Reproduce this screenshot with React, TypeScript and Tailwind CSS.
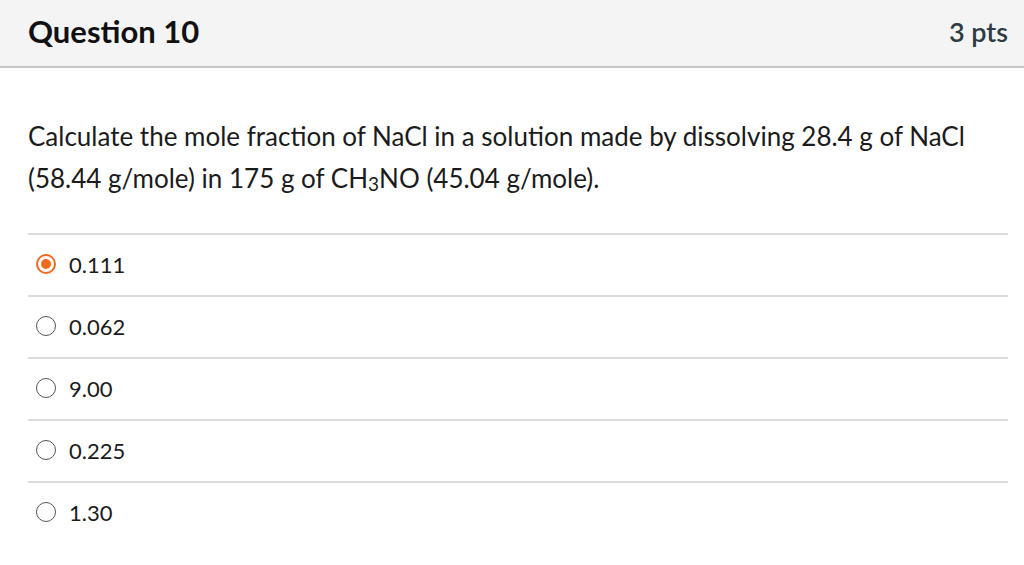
import React from "react";

const options = ["0.111", "0.062", "9.00", "0.225", "1.30"];

export default function App() {
  return (
    <div className="w-[1024px] h-[565px] bg-white overflow-hidden" style={{ fontFamily: "Lato, 'Liberation Sans', sans-serif" }}>
      <div className="h-[68px] bg-[#f4f4f4] border-b-2 border-[#c5c5c5] flex items-center justify-between pl-7 pr-4">
        <div className="text-[31px] font-bold text-[#111] leading-none -mt-[4px]">Question 10</div>
        <div className="text-[27px] font-semibold text-[#2d3b45] leading-none -mt-[3px]">3 pts</div>
      </div>
      <div className="px-7 pt-[47px]">
        <div className="text-[26px] leading-[42px] text-[#1b1b1b]">
          Calculate the mole fraction of NaCl in a solution made by dissolving 28.4 g of NaCl
          <br />
          (58.44 g/mole) in 175 g of CH<sub className="text-[19px] relative top-[3px] align-baseline">3</sub>NO (45.04 g/mole).
        </div>
        <div className="mt-[34px] w-[980px]">
          {options.map((o, i) => (
            <div key={o} className="h-[62px] border-t-2 border-[#dcdcdc] flex items-center">
              <div className="w-[20px] h-[20px] ml-[8px] -mt-[2px] rounded-full flex items-center justify-center shrink-0">
                {i === 0 ? (
                  <div className="w-[20px] h-[20px] rounded-full border-2 border-[#f06a1d] flex items-center justify-center">
                    <div className="w-[10px] h-[10px] rounded-full bg-[#f06a1d]" />
                  </div>
                ) : (
                  <div className="w-[20px] h-[20px] rounded-full border-[1.5px] border-[#555]" />
                )}
              </div>
              <div className="ml-[13px] -mt-[2px] text-[22px] text-[#1b1b1b]">{o}</div>
            </div>
          ))}
        </div>
      </div>
    </div>
  );
}
